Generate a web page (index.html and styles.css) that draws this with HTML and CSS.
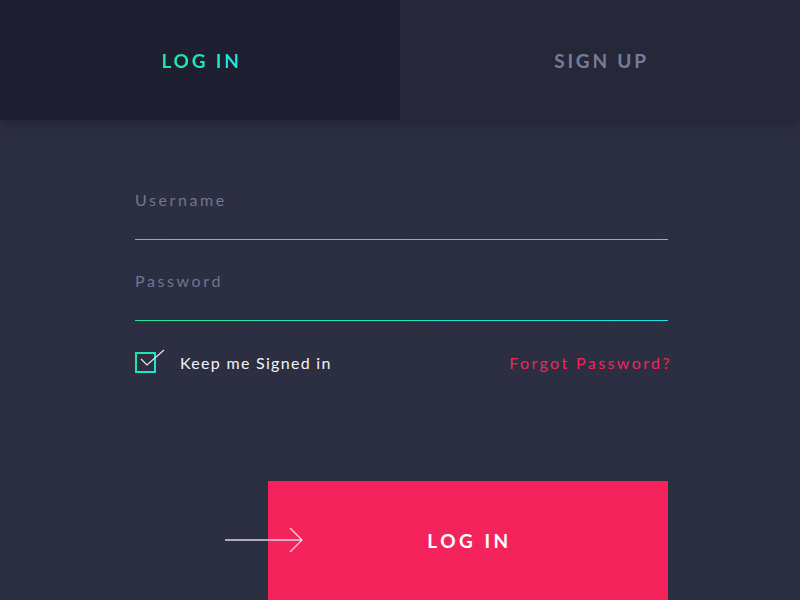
FILE: index.html
```html
<!DOCTYPE html>
<html>
<head>
<meta charset="utf-8">
<link rel="stylesheet" href="styles.css">
</head>
<body>
<div class="tabs">
  <div class="tab active"><span class="grad-text">LOG IN</span></div>
  <div class="tab">SIGN UP</div>
</div>
<main class="form">
  <div class="field">
    <label class="label">Username</label>
    <div class="line"></div>
  </div>
  <div class="field">
    <label class="label">Password</label>
    <div class="line"></div>
  </div>
  <div class="options">
    <div class="remember">
      <span class="check">
        <svg width="32" height="24" viewBox="0 0 32 24"><polyline points="6,11 12,17 29,2" fill="none" stroke="#e4e6f0" stroke-width="1.2"/></svg>
      </span>
      <span class="remember-text">Keep me Signed in</span>
    </div>
    <a class="forgot">Forgot Password?</a>
  </div>
  <div class="submit-row">
    <button class="submit">LOG IN</button>
    <svg class="arrow" width="80" height="30" viewBox="0 0 80 30"><line x1="0" y1="15" x2="77" y2="15" stroke="#d9dae4" stroke-width="1.5"/><polyline points="65,3 77,15 65,27" fill="none" stroke="#f2d7e0" stroke-width="1.3"/></svg>
  </div>
</main>
</body>
</html>
```

FILE: styles.css
```css
html, body {
  margin: 0;
  padding: 0;
  height: 600px;
  overflow: hidden;
}
body {
  background: #2c2f42;
  font-family: Lato, "Open Sans", sans-serif;
}
.tabs {
  display: flex;
  height: 120px;
  box-shadow: 0 4px 14px rgba(20, 21, 32, 0.45);
  position: relative;
  z-index: 1;
}
.tab {
  flex: 1;
  display: flex;
  align-items: center;
  justify-content: center;
  background: #262839;
  color: #777c99;
  font-size: 19px;
  font-weight: 700;
  letter-spacing: 2.8px;
  padding-left: 3px;
}
.tab.active {
  background: #1e1f30;
}
.grad-text {
  background: linear-gradient(90deg, #1ee89a, #1ce4e6);
  -webkit-background-clip: text;
  background-clip: text;
  color: transparent;
}
.form {
  margin-left: 135px;
  width: 533px;
  padding-top: 70px;
}
.field {
  display: flex;
  flex-direction: column;
}
.field + .field {
  margin-top: 31px;
}
.label {
  font-size: 16px;
  letter-spacing: 2.6px;
  color: #71758f;
  line-height: 20px;
}
.line {
  margin-top: 29px;
  height: 1px;
  background: linear-gradient(90deg, #22e89a, #1ee6ea);
}
.options {
  display: flex;
  justify-content: space-between;
  align-items: center;
  margin-top: 31px;
  width: 537px;
}
.remember {
  display: flex;
  align-items: center;
}
.check {
  position: relative;
  width: 17px;
  height: 17px;
  border: 2px solid transparent;
  background: linear-gradient(#2c2f42, #2c2f42) padding-box, linear-gradient(135deg, #20e69c, #1ee4e8) border-box;
}
.check svg {
  position: absolute;
  left: -2px;
  top: -6px;
}
.remember-text {
  margin-left: 24px;
  font-size: 16px;
  letter-spacing: 1.3px;
  color: #f2f3f8;
}
.forgot {
  font-size: 16px;
  letter-spacing: 2.4px;
  color: #f4235c;
}
.submit-row {
  position: relative;
  margin-top: 108px;
  display: flex;
  justify-content: flex-end;
}
.submit {
  width: 400px;
  height: 130px;
  border: none;
  background: #f4235c;
  color: #ffffff;
  font-family: Lato, sans-serif;
  font-size: 19px;
  font-weight: 700;
  letter-spacing: 3.5px;
  padding: 0 0 0 3px;
  align-self: flex-start;
  display: flex;
  align-items: flex-start;
  justify-content: center;
  padding-top: 48px;
}
.arrow {
  position: absolute;
  left: 90px;
  top: 44px;
}
```
